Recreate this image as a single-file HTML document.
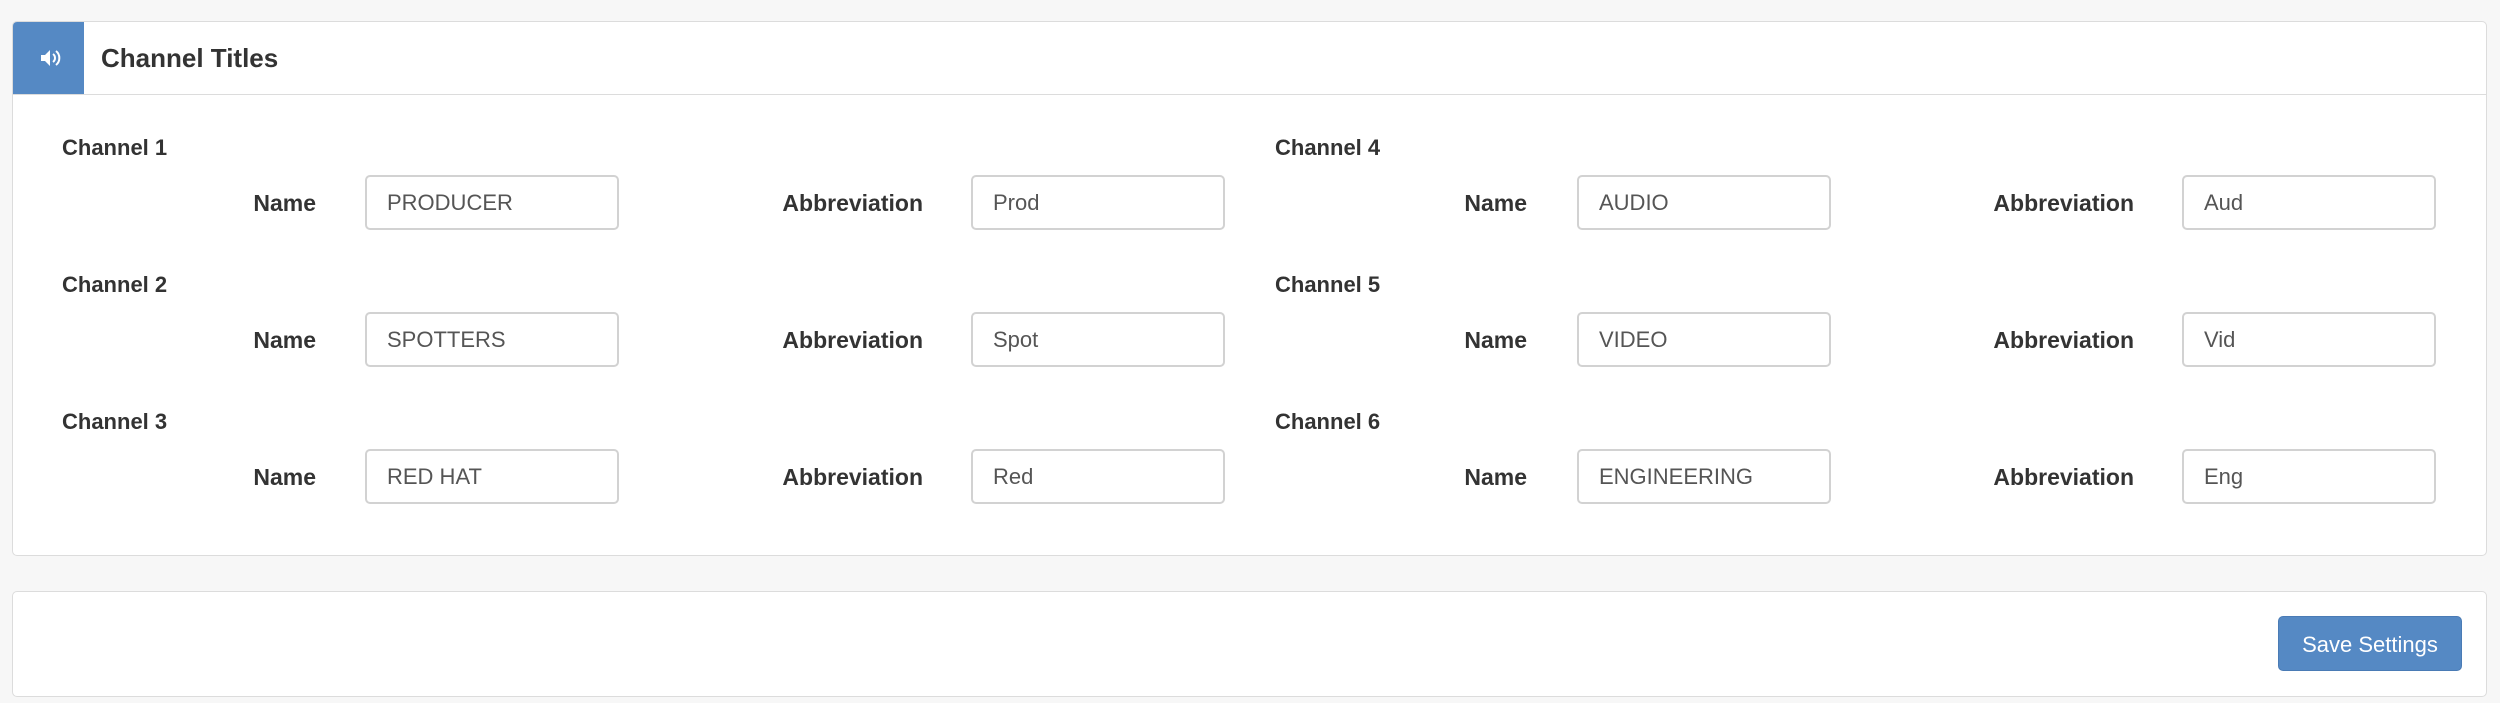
<!DOCTYPE html>
<html><head><style>
body{margin:0;width:2500px;height:703px;background:#f7f7f7;font-family:"Liberation Sans",sans-serif;color:#333;position:relative;overflow:hidden}
.p{position:absolute;left:12px;width:2475px;background:#fff;border:1.5px solid #dcdcdc;border-radius:5px;box-sizing:border-box}
.hd{position:absolute;left:0;top:0;right:0;height:72px;border-bottom:1.5px solid #dcdcdc}
.ic{position:absolute;left:0;top:0;width:71px;height:72px;background:#5589c4;border-top-left-radius:4px}
.t{position:absolute;font-size:26px;font-weight:bold;left:88px;top:21px}
.a{position:absolute;font-weight:bold;font-size:22px}
.n{font-size:23px}
.r{text-align:right;width:300px}
.in{position:absolute;width:254px;height:55px;border:2px solid #d2d2d2;border-radius:5px;box-sizing:border-box;font-size:22px;padding-left:20px;line-height:51px;color:#555;background:#fff}
.btn{position:absolute;left:2278px;top:616px;width:184px;height:55px;background:#5589c4;border-radius:5px;color:#fff;font-size:22px;text-align:center;line-height:55px;border:1px solid #4a7bb5;box-sizing:border-box}
</style></head><body>
<div class="p" style="top:21px;height:535px">
<div class="hd"><div class="ic"><svg width="71" height="72" viewBox="0 0 71 72"><path d="M28 33h4l5-5v16l-5-5h-4z" fill="#fff"/><path d="M40 32a5 5 0 0 1 0 8M43 29a9 9 0 0 1 0 14" stroke="#fff" stroke-width="2" fill="none"/></svg></div><div class="t">Channel Titles</div></div>
</div>
<div class="p" style="top:591px;height:106px"></div>

<div class="a" style="left:62px;top:135px">Channel 1</div>
<div class="a" style="left:62px;top:272px">Channel 2</div>
<div class="a" style="left:62px;top:409px">Channel 3</div>
<div class="a" style="left:1275px;top:135px">Channel 4</div>
<div class="a" style="left:1275px;top:272px">Channel 5</div>
<div class="a" style="left:1275px;top:409px">Channel 6</div>

<div class="a n r" style="left:16px;top:190px">Name</div>
<div class="a n r" style="left:16px;top:327px">Name</div>
<div class="a n r" style="left:16px;top:464px">Name</div>
<div class="a n r" style="left:623px;top:190px">Abbreviation</div>
<div class="a n r" style="left:623px;top:327px">Abbreviation</div>
<div class="a n r" style="left:623px;top:464px">Abbreviation</div>
<div class="a n r" style="left:1227px;top:190px">Name</div>
<div class="a n r" style="left:1227px;top:327px">Name</div>
<div class="a n r" style="left:1227px;top:464px">Name</div>
<div class="a n r" style="left:1834px;top:190px">Abbreviation</div>
<div class="a n r" style="left:1834px;top:327px">Abbreviation</div>
<div class="a n r" style="left:1834px;top:464px">Abbreviation</div>

<div class="in" style="left:365px;top:175px">PRODUCER</div>
<div class="in" style="left:365px;top:312px">SPOTTERS</div>
<div class="in" style="left:365px;top:449px">RED HAT</div>
<div class="in" style="left:971px;top:175px">Prod</div>
<div class="in" style="left:971px;top:312px">Spot</div>
<div class="in" style="left:971px;top:449px">Red</div>
<div class="in" style="left:1577px;top:175px">AUDIO</div>
<div class="in" style="left:1577px;top:312px">VIDEO</div>
<div class="in" style="left:1577px;top:449px">ENGINEERING</div>
<div class="in" style="left:2182px;top:175px">Aud</div>
<div class="in" style="left:2182px;top:312px">Vid</div>
<div class="in" style="left:2182px;top:449px">Eng</div>

<div class="btn">Save Settings</div>
</body></html>
